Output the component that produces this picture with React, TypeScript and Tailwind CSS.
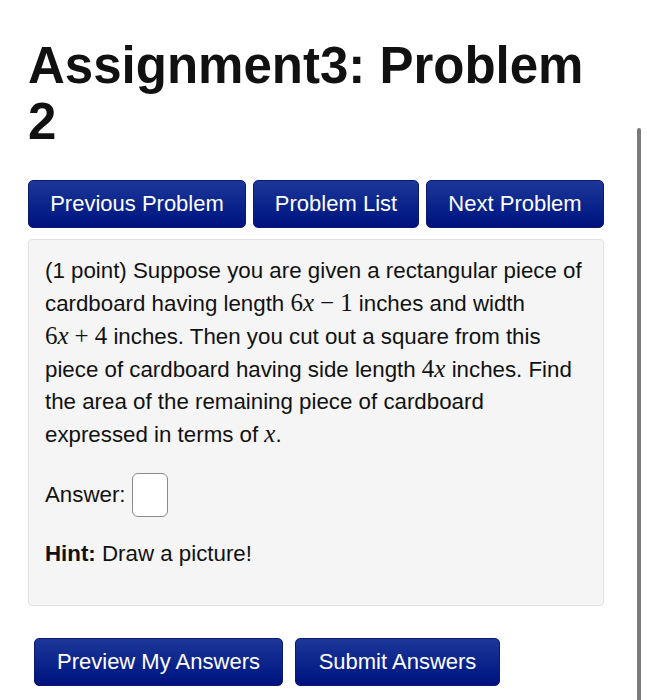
import React from 'react';

const NavButton: React.FC<{ label: string; className?: string }> = ({ label, className = '' }) => (
    <button
        className={`h-[48px] rounded-[5px] border border-[#0b1a6e] bg-gradient-to-b from-[#1d3699] to-[#00107f] text-white text-[22px] leading-none ${className}`}
    >
        {label}
    </button>
);

// MathJax-ish inline math
const M: React.FC<{ children: React.ReactNode }> = ({ children }) => (
    <span className="whitespace-nowrap font-['Liberation_Serif','DejaVu_Serif',serif] text-[25px]">{children}</span>
);
const X = () => <span className="italic">x</span>;
const Op: React.FC<{ s: string }> = ({ s }) => <span className="mx-[6px]">{s}</span>;

const App: React.FC = () => {
    return (
        <div className="relative min-h-[700px] bg-white text-[#111] font-['Liberation_Sans',Arial,sans-serif] overflow-hidden">
            <div className="ml-[28px] w-[576px] pt-[38px]">
                <h1 className="text-[51px] font-bold leading-[56px]">Assignment3: Problem 2</h1>

                <div className="mt-[30px] flex gap-[7px]">
                    <NavButton label="Previous Problem" className="w-[218px]" />
                    <NavButton label="Problem List" className="w-[166px]" />
                    <NavButton label="Next Problem" className="w-[178px]" />
                </div>

                <div className="mt-[11px] h-[367px] rounded-[4px] border border-[#e1e1e1] bg-[#f5f5f5] px-[16px] pt-[15px] text-[22.3px] leading-[32px]">
                    <p>
                        (1 point) Suppose you are given a rectangular piece of cardboard having length{' '}
                        <M>6<X /><Op s="−" />1</M> inches and width <M>6<X /><Op s="+" />4</M> inches. Then you cut
                        out a square from this piece of cardboard having side length <M>4<X /></M> inches. Find the
                        area of the remaining piece of cardboard expressed in terms of <M><X /></M>.
                    </p>

                    <div className="mt-[22px] flex items-center gap-[6px]">
                        <span>Answer:</span>
                        <input
                            type="text"
                            className="h-[44px] w-[36px] rounded-[6px] border border-[#8a8a8a] bg-white outline-none"
                        />
                    </div>

                    <p className="mt-[21px]">
                        <b>Hint:</b> Draw a picture!
                    </p>
                </div>

                <div className="mt-[32px] ml-[6px] flex gap-[12px]">
                    <NavButton label="Preview My Answers" className="w-[249px]" />
                    <NavButton label="Submit Answers" className="w-[205px]" />
                </div>
            </div>

            {/* scrollbar indicator */}
            <div className="absolute right-[6px] top-[128px] h-[580px] w-[4px] rounded-full bg-[#7a7a7a]" />
        </div>
    );
};

export default App;
